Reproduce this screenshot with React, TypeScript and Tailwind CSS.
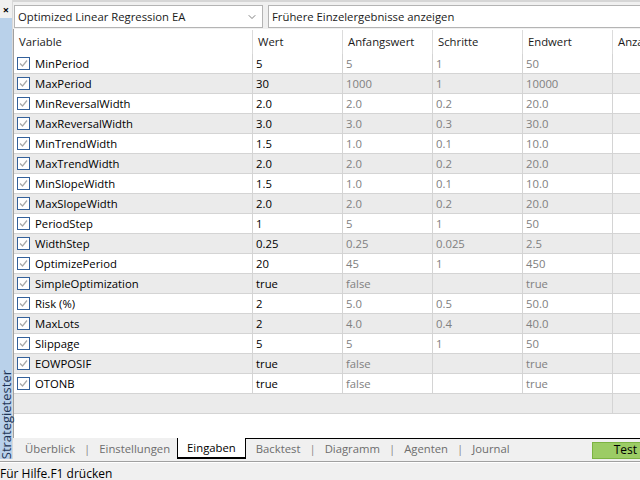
import { ChevronDown } from "lucide-react";

/* =======================
   Data
======================= */

interface Param {
  name: string;
  value: string;
  start: string;
  step: string;
  stop: string;
}

const params: Param[] = [
  { name: "MinPeriod", value: "5", start: "5", step: "1", stop: "50" },
  { name: "MaxPeriod", value: "30", start: "1000", step: "1", stop: "10000" },
  { name: "MinReversalWidth", value: "2.0", start: "2.0", step: "0.2", stop: "20.0" },
  { name: "MaxReversalWidth", value: "3.0", start: "3.0", step: "0.3", stop: "30.0" },
  { name: "MinTrendWidth", value: "1.5", start: "1.0", step: "0.1", stop: "10.0" },
  { name: "MaxTrendWidth", value: "2.0", start: "2.0", step: "0.2", stop: "20.0" },
  { name: "MinSlopeWidth", value: "1.5", start: "1.0", step: "0.1", stop: "10.0" },
  { name: "MaxSlopeWidth", value: "2.0", start: "2.0", step: "0.2", stop: "20.0" },
  { name: "PeriodStep", value: "1", start: "5", step: "1", stop: "50" },
  { name: "WidthStep", value: "0.25", start: "0.25", step: "0.025", stop: "2.5" },
  { name: "OptimizePeriod", value: "20", start: "45", step: "1", stop: "450" },
  { name: "SimpleOptimization", value: "true", start: "false", step: "", stop: "true" },
  { name: "Risk (%)", value: "2", start: "5.0", step: "0.5", stop: "50.0" },
  { name: "MaxLots", value: "2", start: "4.0", step: "0.4", stop: "40.0" },
  { name: "Slippage", value: "5", start: "5", step: "1", stop: "50" },
  { name: "EOWPOSIF", value: "true", start: "false", step: "", stop: "true" },
  { name: "OTONB", value: "true", start: "false", step: "", stop: "true" },
];

const font = { fontFamily: "'Open Sans', 'Noto Sans', sans-serif" };

/* =======================
   Pieces
======================= */

const CheckBox = () => (
  <div className="w-[13px] h-[13px] shrink-0 border border-[#33609a] bg-white flex items-center justify-center">
    <svg width="9" height="9" viewBox="0 0 9 9">
      <path d="M1 4.5 L3.5 7 L8 1.5" fill="none" stroke="#a9a9a9" strokeWidth="1.2" />
    </svg>
  </div>
);

const Sep = () => <span className="text-[#8a8a8a] px-[9px]">|</span>;

/* =======================
   App
======================= */

export default function App() {
  return (
    <div
      className="w-[640px] h-[480px] bg-[#f0f0f0] flex flex-col overflow-hidden text-[11.3px] leading-none"
      style={font}
    >
      {/* Main */}
      <div className="h-[459px] flex">
        {/* Side strip */}
        <div className="w-[13px] shrink-0 flex flex-col border-r border-[#d9d9d9]">
          <div className="h-[18px] flex items-start justify-center pt-[4px] text-[11px] font-bold text-black">
            ×
          </div>
          <div className="flex-1 bg-[#b9d1ea] flex flex-col justify-end items-center">
            <span className="[writing-mode:vertical-rl] rotate-180 text-[13px] text-[#1d3557]">
              Strategietester
            </span>
          </div>
        </div>

        {/* Content */}
        <div className="flex-1 min-w-0 flex flex-col">
          {/* Top bar */}
          <div className="h-[29px] flex items-start gap-[5px] pt-[3px] pl-[1px] border-t-2 border-[#d6d6d6]">
            <div className="w-[249px] h-[23px] bg-white border border-[#b4b4b4] flex items-center pl-[3px] pr-[4px]">
              <span className="flex-1 text-[#1a1a1a]">Optimized Linear Regression EA</span>
              <ChevronDown className="w-[12px] h-[12px] text-[#555]" strokeWidth={1.5} />
            </div>
            <div className="flex-1 h-[23px] bg-white border border-[#b4b4b4] border-r-0 flex items-center pl-[3px]">
              <span className="text-[#1a1a1a]">Frühere Einzelergebnisse anzeigen</span>
            </div>
          </div>

          {/* Table */}
          <div className="flex-1 bg-white flex flex-col border-l border-[#a0a0a0]">
            {/* Header */}
            <div className="h-[25px] flex text-[#1a1a1a] pt-[1px]">
              <div className="w-[239px] border-r border-[#dcdcdc] pl-[5px] flex items-center">Variable</div>
              <div className="w-[90px] border-r border-[#dcdcdc] pl-[5px] flex items-center">Wert</div>
              <div className="w-[90px] border-r border-[#dcdcdc] pl-[5px] flex items-center">Anfangswert</div>
              <div className="w-[90px] border-r border-[#dcdcdc] pl-[5px] flex items-center">Schritte</div>
              <div className="w-[90px] border-r border-[#dcdcdc] pl-[5px] flex items-center">Endwert</div>
              <div className="flex-1 pl-[5px] flex items-center whitespace-nowrap overflow-hidden">Anzahl</div>
            </div>

            {/* Rows */}
            {params.map((p, i) => (
              <div
                key={p.name}
                className={`h-[20px] flex border-b border-[#d4d4d4] ${i % 2 === 1 ? "bg-[#ebebeb]" : "bg-white"}`}
              >
                <div className="w-[239px] border-r border-[#d4d4d4] pl-[3px] flex items-center gap-[5px]">
                  <CheckBox />
                  <span className="text-black">{p.name}</span>
                </div>
                <div className="w-[90px] border-r border-[#d4d4d4] pl-[3px] flex items-center text-black">
                  {p.value}
                </div>
                <div className="w-[90px] border-r border-[#d4d4d4] pl-[3px] flex items-center text-[#808080]">
                  {p.start}
                </div>
                <div className="w-[90px] border-r border-[#d4d4d4] pl-[3px] flex items-center text-[#808080]">
                  {p.step}
                </div>
                <div className="w-[90px] border-r border-[#d4d4d4] pl-[3px] flex items-center text-[#808080]">
                  {p.stop}
                </div>
                <div className="flex-1" />
              </div>
            ))}

            {/* Empty filler row */}
            <div className="h-[20px] flex bg-[#ebebeb] border-b border-[#d4d4d4]">
              <div className="w-[599px] border-r border-[#d4d4d4]" />
              <div className="flex-1" />
            </div>
            <div className="flex-1" />
          </div>

          {/* Tabs */}
          <div className="h-[21px] flex items-stretch text-[11.3px]">
            <div className="flex items-center pl-[12px] pr-[7px] text-[#6d6d6d]">
              <span>Überblick</span>
              <Sep />
              <span>Einstellungen</span>
            </div>
            <div className="bg-white border-x border-b-2 border-black flex items-center px-[9px] text-black">
              Eingaben
            </div>
            <div className="flex-1 min-w-0 flex items-center border-t border-black text-[#6d6d6d] pl-[10px]">
              <span>Backtest</span>
              <Sep />
              <span>Diagramm</span>
              <Sep />
              <span>Agenten</span>
              <Sep />
              <span>Journal</span>
              <div className="flex-1" />
              <div className="w-[48px] shrink-0 h-[17px] mt-[2px] bg-[#9ccc65] border border-[#7cb342] border-r-0 flex items-center justify-end pr-[3px] text-black text-[12px]">
                Test
              </div>
            </div>
          </div>
        </div>
      </div>

      {/* Status bar */}
      <div className="h-[3px] border-b border-[#a0a0a0]" />
      <div className="flex-1 flex items-center pt-[4px] text-black text-[12px] border-t border-white">
        Für Hilfe.F1 drücken
      </div>
    </div>
  );
}
